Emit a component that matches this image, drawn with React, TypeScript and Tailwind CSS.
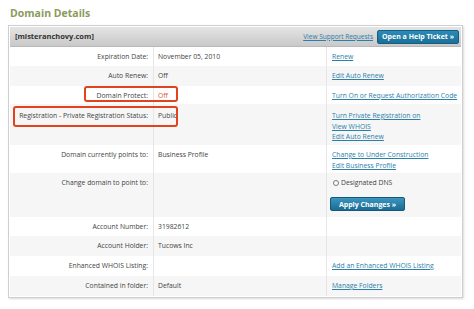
import React from 'react';

type Row = {
  label: string;
  value?: React.ReactNode;
  links?: React.ReactNode;
  h: string;
  pt?: string;
  alt: boolean;
};

const Link = ({ children }: { children: React.ReactNode }) => (
  <div className="text-[#2b7fa9] underline underline-offset-1 leading-[10.5px]">{children}</div>
);

const rows: Row[] = [
  { label: 'Expiration Date:', value: 'November 05, 2010', links: <Link>Renew</Link>, h: 'h-[19px]', alt: false },
  { label: 'Auto Renew:', value: 'Off', links: <Link>Edit Auto Renew</Link>, h: 'h-[20px]', alt: true },
  {
    label: 'Domain Protect:',
    value: <span className="text-[#e0532f]">Off</span>,
    links: <Link>Turn On or Request Authorization Code</Link>,
    h: 'h-[18px]',
    alt: false,
  },
  {
    label: 'Registration - Private Registration Status:',
    value: 'Public',
    links: (
      <>
        <Link>Turn Private Registration on</Link>
        <Link>View WHOIS</Link>
        <Link>Edit Auto Renew</Link>
      </>
    ),
    h: 'h-[41px]',
    pt: 'pt-[7px]',
    alt: true,
  },
  {
    label: 'Domain currently points to:',
    value: 'Business Profile',
    links: (
      <>
        <Link>Change to Under Construction</Link>
        <Link>Edit Business Profile</Link>
      </>
    ),
    h: 'h-[28px]',
    alt: false,
  },
  {
    label: 'Change domain to point to:',
    links: (
      <div className="flex flex-col gap-[9px] -ml-[2px]">
        <div className="flex items-center gap-[2px] text-[#444] pl-[3px]">
          <span className="inline-block w-[6px] h-[6px] rounded-full border border-[#777] bg-white" />
          <span className="leading-[10px]">Designated DNS</span>
        </div>
        <button className="w-[75px] h-[14px] rounded-[2px] border border-[#14587a] bg-gradient-to-b from-[#3b95bf] to-[#1a6c93] text-white font-bold text-[7px] leading-none">
          Apply Changes »
        </button>
      </div>
    ),
    h: 'h-[44px]',
    alt: true,
  },
  { label: 'Account Number:', value: '31982612', h: 'h-[19px]', alt: false },
  { label: 'Account Holder:', value: 'Tucows Inc', h: 'h-[20px]', alt: true },
  { label: 'Enhanced WHOIS Listing:', links: <Link>Add an Enhanced WHOIS Listing</Link>, h: 'h-[20px]', alt: false },
  { label: 'Contained in folder:', value: 'Default', links: <Link>Manage Folders</Link>, h: 'h-[20px]', alt: true },
];

export default function App() {
  return (
    <div
      className="relative w-[474px] h-[309px] bg-white overflow-hidden"
      style={{ fontFamily: '"Open Sans", "DejaVu Sans", sans-serif' }}
    >
      <h1 className="pl-[10px] pt-[6px] h-[25px] text-[10.5px] leading-[14px] font-bold text-[#8b9a5b]">
        Domain Details
      </h1>

      <div className="ml-[8px] w-[455px] border border-[#cfcfcf] shadow-[1px_1px_2px_rgba(0,0,0,0.15)] p-[1px]">
        <div className="h-[20px] flex items-center justify-between pl-[5px] pr-[2px] bg-gradient-to-b from-[#e4e4e4] to-[#c9c9c9] border-b border-[#b9b9b9]">
          <span className="text-[7.5px] font-bold text-[#333]">[misteranchovy.com]</span>
          <div className="flex items-center gap-[4px]">
            <span className="text-[6.5px] text-[#2b7fa9] underline">View Support Requests</span>
            <button className="w-[82px] h-[14px] rounded-[2px] bg-gradient-to-b from-[#2c8cb8] to-[#1a6f97] border border-[#155e80] text-white font-bold text-[7px] leading-none">
              Open a Help Ticket »
            </button>
          </div>
        </div>

        {rows.map((r) => (
          <div
            key={r.label}
            className={`grid grid-cols-[143px_173px_1fr] text-[6.8px] ${r.h} ${r.alt ? 'bg-[#f6f6f6]' : 'bg-white'}`}
          >
            <div className={`pr-[5px] ${r.pt ?? 'pt-[5px]'} text-right text-[#454545] leading-[10px] whitespace-nowrap`}>
              {r.label}
            </div>
            <div className={`border-l border-[#e6e6e6] pl-[4px] ${r.pt ?? 'pt-[5px]'} text-[#444] leading-[10px]`}>
              {r.value}
            </div>
            <div className={`border-l border-[#e6e6e6] pl-[5px] ${r.pt ?? 'pt-[5px]'}`}>{r.links}</div>
          </div>
        ))}
      </div>

      <div className="absolute left-[84px] top-[86px] w-[94px] h-[16px] border-[2.5px] border-[#e2431f] rounded-[3px]" />
      <div className="absolute left-[13px] top-[106px] w-[165px] h-[21px] border-[2.5px] border-[#e2431f] rounded-[3px]" />
    </div>
  );
}
